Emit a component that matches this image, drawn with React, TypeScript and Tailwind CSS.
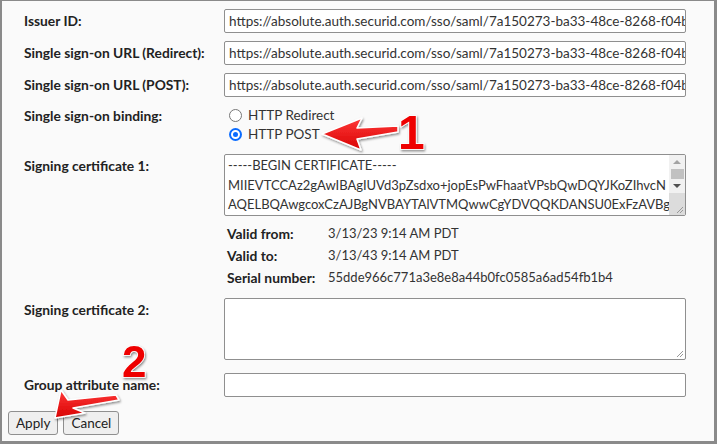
import React from 'react';

const URL = 'https://absolute.auth.securid.com/sso/saml/7a150273-ba33-48ce-8268-f04b1d3c9e22';

function Label({ children }: { children: React.ReactNode }) {
  return <div className="w-[200px] shrink-0 pt-[3px] text-[13.8px] leading-[18px] font-bold text-[#222]">{children}</div>;
}

function TextInput({ value }: { value?: string }) {
  return (
    <div className="w-[462px] h-[24px] border border-[#8f8f8f] rounded-[2px] bg-white px-[4px] text-[13.5px] leading-[22px] text-[#333] overflow-hidden whitespace-nowrap">
      {value}
    </div>
  );
}

function Grip() {
  return (
    <svg className="absolute right-[1px] bottom-[1px]" width="10" height="10" viewBox="0 0 10 10">
      <path d="M9 3 L3 9 M9 6 L6 9" stroke="#999" strokeWidth="1" />
    </svg>
  );
}

function Radio({ checked, label }: { checked?: boolean; label: string }) {
  return (
    <div className="flex items-center h-[19px] gap-[6px]">
      {checked ? (
        <span className="w-[13px] h-[13px] rounded-full bg-[#0a6cff] flex items-center justify-center">
          <span className="w-[9px] h-[9px] rounded-full border-2 border-white bg-[#0a6cff]" />
        </span>
      ) : (
        <span className="w-[13px] h-[13px] rounded-full border border-[#777] bg-white" />
      )}
      <span className="text-[13.5px] text-[#333]">{label}</span>
    </div>
  );
}

function Arrow1() {
  return (
    <svg className="absolute left-[310px] top-[104px]" width="125" height="54" viewBox="310 104 125 54">
      <defs>
        <linearGradient id="g1" x1="0" y1="0" x2="0" y2="1">
          <stop offset="0" stopColor="#ff3a3a" />
          <stop offset="1" stopColor="#d80000" />
        </linearGradient>
        <filter id="s1" x="-20%" y="-40%" width="140%" height="180%">
          <feDropShadow dx="1" dy="1.5" stdDeviation="1" floodColor="#000" floodOpacity="0.45" />
        </filter>
      </defs>
      <polygon
        points="320,133 360,117 355,127 396,125 396,131 355,138 359,149"
        fill="url(#g1)"
        stroke="#fff"
        strokeWidth="1.5"
        strokeLinejoin="round"
        filter="url(#s1)"
      />
      <text x="396" y="148" fontFamily="'Liberation Sans', Arial, sans-serif" fontWeight="bold" fontSize="48" fill="#e00" stroke="#fff" strokeWidth="1.5" paintOrder="stroke" filter="url(#s1)">1</text>
    </svg>
  );
}

function Arrow2() {
  return (
    <svg className="absolute left-[40px] top-[336px]" width="120" height="92" viewBox="40 336 120 92">
      <defs>
        <linearGradient id="g2" x1="0" y1="0" x2="0" y2="1">
          <stop offset="0" stopColor="#ff3a3a" />
          <stop offset="1" stopColor="#d80000" />
        </linearGradient>
        <filter id="s2" x="-30%" y="-30%" width="160%" height="160%">
          <feDropShadow dx="1" dy="1.5" stdDeviation="1" floodColor="#000" floodOpacity="0.45" />
        </filter>
      </defs>
      <polygon
        points="53,417 59,389 66,399 114,394 117,399 71,407 83,412"
        fill="url(#g2)"
        stroke="#fff"
        strokeWidth="1.5"
        strokeLinejoin="round"
        filter="url(#s2)"
      />
      <text x="120" y="376" fontFamily="'Liberation Sans', Arial, sans-serif" fontWeight="bold" fontSize="44" fill="#e00" stroke="#fff" strokeWidth="1.5" paintOrder="stroke" filter="url(#s2)">2</text>
    </svg>
  );
}

export default function App() {
  return (
    <div className="relative w-[717px] h-[444px] bg-[#fafafa] border-l-2 border-t border-r-[3px] border-b-[3px] border-[#8a8a8a] overflow-hidden" style={{ fontFamily: 'Lato, "Noto Sans", sans-serif' }}>
      <div className="pl-[22px] pt-[8px] flex flex-col">
        <div className="flex h-[24px]">
          <Label>Issuer ID:</Label>
          <TextInput value={URL} />
        </div>
        <div className="flex h-[24px] mt-[8px]">
          <Label>Single sign-on URL (Redirect):</Label>
          <TextInput value={URL} />
        </div>
        <div className="flex h-[24px] mt-[8px]">
          <Label>Single sign-on URL (POST):</Label>
          <TextInput value={URL} />
        </div>
        <div className="flex mt-[9px]">
          <div className="w-[200px] shrink-0 pt-[1px] text-[13.8px] leading-[18px] font-bold text-[#222]">Single sign-on binding:</div>
          <div className="flex flex-col pl-[5px]">
            <Radio label="HTTP Redirect" />
            <Radio checked label="HTTP POST" />
          </div>
        </div>
        <div className="flex mt-[10px]">
          <Label>Signing certificate 1:</Label>
          <div className="flex flex-col">
            <div className="relative w-[462px] h-[62px] border border-[#8f8f8f] rounded-[2px] bg-white overflow-hidden flex">
              <div className="flex-1 pl-[3px] pt-[1px] text-[13px] leading-[19.5px] text-[#333] whitespace-nowrap overflow-hidden">
                <div>-----BEGIN CERTIFICATE-----</div>
                <div>MIIEVTCCAz2gAwIBAgIUVd3pZsdxo+jopEsPwFhaatVPsbQwDQYJKoZIhvcN</div>
                <div>AQELBQAwgcoxCzAJBgNVBAYTAlVTMQwwCgYDVQQKDANSU0ExFzAVBgNV</div>
              </div>
              <div className="w-[16px] shrink-0 bg-[#f1f1f1] flex flex-col items-center">
                <div className="h-[14px] flex items-center justify-center">
                  <span className="w-0 h-0 border-l-[4px] border-r-[4px] border-b-[4px] border-l-transparent border-r-transparent border-b-[#a3a3a3]" />
                </div>
                <div className="w-[13px] h-[10px] bg-[#c1c1c1]" />
                <div className="h-[14px] flex items-center justify-center">
                  <span className="w-0 h-0 border-l-[4px] border-r-[4px] border-t-[4px] border-l-transparent border-r-transparent border-t-[#505050]" />
                </div>
                <div className="flex-1 w-full bg-[#dcdcdc]" />
              </div>
              <Grip />
            </div>
            <div className="mt-[7px] pl-[3px] flex flex-col text-[13.5px] text-[#222]">
              {[
                ['Valid from:', '3/13/23 9:14 AM PDT'],
                ['Valid to:', '3/13/43 9:14 AM PDT'],
                ['Serial number:', '55dde966c771a3e8e8a44b0fc0585a6ad54fb1b4'],
              ].map(([k, v]) => (
                <div key={k} className="flex h-[22px] items-center">
                  <span className="w-[101px] font-bold text-[13.8px]">{k}</span>
                  <span className="text-[#333] text-[13px]">{v}</span>
                </div>
              ))}
            </div>
          </div>
        </div>
        <div className="flex mt-[9px]">
          <Label>Signing certificate 2:</Label>
          <div className="relative w-[462px] h-[62px] border border-[#8f8f8f] rounded-[2px] bg-white">
            <Grip />
          </div>
        </div>
        <div className="flex h-[24px] mt-[13px]">
          <Label>Group attribute name:</Label>
          <TextInput />
        </div>
        <div className="flex gap-[5px] mt-[14px] -ml-[16px]">
          <button className="h-[24px] px-[7px] border border-[#8f8f8f] rounded-[3px] bg-[#efefef] text-[13.5px] text-[#222]">Apply</button>
          <button className="h-[24px] px-[7px] border border-[#8f8f8f] rounded-[3px] bg-[#efefef] text-[13.5px] text-[#222]">Cancel</button>
        </div>
      </div>
      <Arrow1 />
      <Arrow2 />
    </div>
  );
}
